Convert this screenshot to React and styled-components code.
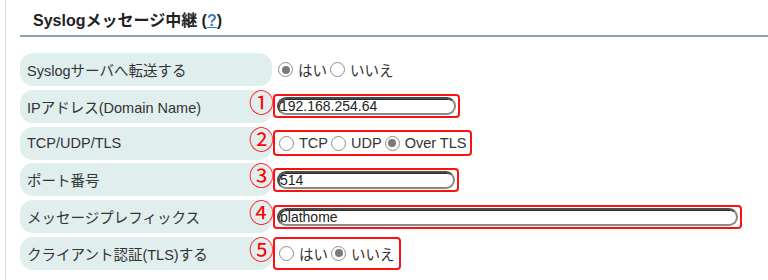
import React from 'react'
import styled, { createGlobalStyle } from 'styled-components'

const GlobalStyle = createGlobalStyle`
  html, body {
    margin: 0;
    padding: 0;
    background: #fff;
  }
  body {
    font-family: "Liberation Sans", "Noto Sans CJK JP", sans-serif;
    color: #333;
  }
`

const Page = styled.div`
  margin-left: 5px;
  min-height: 280px;
  border-left: 1px solid #dcdcdc;
  padding-left: 14px;
  box-sizing: border-box;
`

const Header = styled.div`
  height: 37px;
  border-bottom: 2px solid #86a7ab;
  display: flex;
  align-items: center;
  padding-left: 13px;
  padding-top: 2px;
  box-sizing: border-box;
`

const Title = styled.h2`
  margin: 0;
  font-size: 16px;
  font-weight: bold;
  color: #222;
`

const HelpLink = styled.a`
  color: #3a7db5;
  text-decoration: underline;
`

const Form = styled.div`
  display: flex;
  flex-direction: column;
  gap: 3.8px;
  margin-top: 16px;
`

const Row = styled.div`
  display: grid;
  grid-template-columns: 252px 1fr;
  height: 33px;
`

const Label = styled.div`
  background: #e1eeee;
  border-radius: 13px;
  display: flex;
  align-items: center;
  padding-left: 7px;
  font-size: 14.5px;
  color: #333;
`

const Value = styled.div`
  position: relative;
  display: flex;
  align-items: center;
  padding-left: ${p => p.$pad || 1}px;
`

const Marker = styled.span`
  position: absolute;
  left: -23px;
  top: -3px;
  font-family: "Noto Sans CJK JP", sans-serif;
  font-size: 25px;
  line-height: 28px;
  color: #f00;
`

const Highlight = styled.div`
  border: 2px solid #ff1010;
  border-radius: 4px;
  padding: ${p => p.$padding || '1px 2px'};
  display: flex;
  align-items: center;
`

const TextInput = styled.div`
  width: ${p => p.$width}px;
  height: 18px;
  box-sizing: border-box;
  border: 2px solid #4a4a4a;
  border-bottom-color: #8a8a8a;
  border-right-color: #8a8a8a;
  border-radius: 10px;
  box-shadow: inset 1px 1px 0 #2a2a2a;
  font-size: 14px;
  line-height: 14px;
  color: #222;
  padding-left: 1px;
  display: flex;
  align-items: center;
  white-space: nowrap;
  overflow: hidden;
`

const Options = styled.div`
  display: flex;
  align-items: center;
  font-size: 14.5px;
  color: #333;
`

const Option = styled.label`
  display: flex;
  align-items: center;
  margin-right: ${p => p.$last ? 0 : 3}px;
`

const Radio = styled.span`
  width: 15px;
  height: 15px;
  box-sizing: border-box;
  border-radius: 50%;
  border: 1.5px solid #8d8d8d;
  background: #fff;
  margin-right: 5px;
  display: inline-flex;
  align-items: center;
  justify-content: center;
  &::after {
    content: '';
    width: 8px;
    height: 8px;
    border-radius: 50%;
    background: ${p => p.$checked ? '#7a7a7a' : 'transparent'};
  }
`

const RadioGroup = ({ options }) => (
  <Options>
    {options.map((o, i) => (
      <Option key={o.label} $last={i === options.length - 1}>
        <Radio $checked={o.checked} />
        {o.label}
      </Option>
    ))}
  </Options>
)

const App = () => {
  return (
    <>
      <GlobalStyle />
      <Page>
        <Header>
          <Title>Syslogメッセージ中継 (<HelpLink>?</HelpLink>)</Title>
        </Header>
        <Form>
          <Row>
            <Label>Syslogサーバへ転送する</Label>
            <Value $pad={6}>
              <RadioGroup options={[{ label: 'はい', checked: true }, { label: 'いいえ' }]} />
            </Value>
          </Row>
          <Row>
            <Label>IPアドレス(Domain Name)</Label>
            <Value>
              <Marker>①</Marker>
              <Highlight>
                <TextInput $width={179}>192.168.254.64</TextInput>
              </Highlight>
            </Value>
          </Row>
          <Row>
            <Label>TCP/UDP/TLS</Label>
            <Value>
              <Marker>②</Marker>
              <Highlight $padding="3px 4px 3px 4px">
                <RadioGroup options={[{ label: 'TCP' }, { label: 'UDP' }, { label: 'Over TLS', checked: true }]} />
              </Highlight>
            </Value>
          </Row>
          <Row>
            <Label>ポート番号</Label>
            <Value>
              <Marker>③</Marker>
              <Highlight>
                <TextInput $width={178}>514</TextInput>
              </Highlight>
            </Value>
          </Row>
          <Row>
            <Label>メッセージプレフィックス</Label>
            <Value>
              <Marker>④</Marker>
              <Highlight>
                <TextInput $width={461}>plathome</TextInput>
              </Highlight>
            </Value>
          </Row>
          <Row>
            <Label>クライアント認証(TLS)する</Label>
            <Value>
              <Marker>⑤</Marker>
              <Highlight $padding="4px 4px 4px 4px">
                <RadioGroup options={[{ label: 'はい' }, { label: 'いいえ', checked: true }]} />
              </Highlight>
            </Value>
          </Row>
        </Form>
      </Page>
    </>
  )
}

export default App
